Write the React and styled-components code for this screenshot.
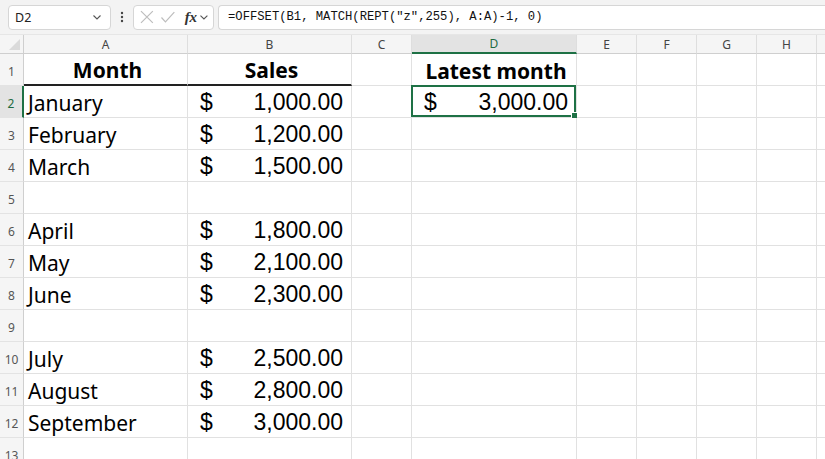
import React from "react";
import styled, { createGlobalStyle } from "styled-components";

const GlobalStyle = createGlobalStyle`
  html, body { margin: 0; padding: 0; background: #ffffff; overflow: hidden; }
  body { font-family: "Noto Sans", "Open Sans", sans-serif; }
`;

const COLS = ["A", "B", "C", "D", "E", "F", "G", "H", "I"];
const WIDTHS = [164, 164, 60, 165, 60, 60, 60, 60, 60];

const rows = [
  { month: "Month", sales: "Sales", head: true },
  { month: "January", sales: "1,000.00" },
  { month: "February", sales: "1,200.00" },
  { month: "March", sales: "1,500.00" },
  {},
  { month: "April", sales: "1,800.00" },
  { month: "May", sales: "2,100.00" },
  { month: "June", sales: "2,300.00" },
  {},
  { month: "July", sales: "2,500.00" },
  { month: "August", sales: "2,800.00" },
  { month: "September", sales: "3,000.00" },
  {},
];

const Chevron = () => (
  <svg width="10" height="10" viewBox="0 0 10 10">
    <path d="M1.5 3.5 L5 7 L8.5 3.5" fill="none" stroke="#555" strokeWidth="1.1" />
  </svg>
);

const App = () => {
  return (
    <>
      <GlobalStyle />
      <Page>
        <Toolbar>
          <NameBox>
            <span>D2</span>
            <Chevron />
          </NameBox>
          <Dots>
            <svg width="4" height="14" viewBox="0 0 4 14">
              <circle cx="2" cy="3" r="1.2" fill="#444" />
              <circle cx="2" cy="7" r="1.2" fill="#444" />
              <circle cx="2" cy="11" r="1.2" fill="#444" />
            </svg>
          </Dots>
          <ActionBox>
            <svg width="16" height="16" viewBox="0 0 16 16">
              <path d="M2 2 L14 14 M14 2 L2 14" stroke="#bdbdbd" strokeWidth="1.2" fill="none" />
            </svg>
            <svg width="16" height="16" viewBox="0 0 16 16">
              <path d="M1.5 8.5 L5.5 13 L14.5 3" stroke="#bdbdbd" strokeWidth="1.2" fill="none" />
            </svg>
            <Fx>fx</Fx>
            <Chevron />
          </ActionBox>
          <FormulaBox>=OFFSET(B1, MATCH(REPT("z",255), A:A)-1, 0)</FormulaBox>
        </Toolbar>

        <Sheet>
          <Corner />
          {COLS.map((c) => (
            <ColHead key={c} $active={c === "D"}>{c === "I" ? "" : c}</ColHead>
          ))}

          {rows.map((r, i) => {
            const n = i + 1;
            return (
              <React.Fragment key={n}>
                <RowHead $active={n === 2}>{n}</RowHead>
                <Cell $underline={r.head} $bold={r.head} $center={r.head}>
                  {r.month}
                </Cell>
                <Cell $underline={r.head} $bold={r.head} $center={r.head}>
                  {r.head ? r.sales : r.sales && (
                    <Money>
                      <span>$</span>
                      <span>{r.sales}</span>
                    </Money>
                  )}
                </Cell>
                <Cell />
                <Cell $bold={n === 1} $center={n === 1}>
                  {n === 1 && "Latest month"}
                  {n === 2 && (
                    <>
                      <Money>
                        <span>$</span>
                        <span>3,000.00</span>
                      </Money>
                      <Selection />
                    </>
                  )}
                </Cell>
                {COLS.slice(4).map((c) => (
                  <Cell key={c} />
                ))}
              </React.Fragment>
            );
          })}
        </Sheet>
      </Page>
    </>
  );
};

export default App;

const Page = styled.div`
  width: 825px;
  height: 459px;
  overflow: hidden;
  background: #ffffff;
`;

const Toolbar = styled.div`
  display: flex;
  align-items: center;
  height: 35px;
  padding: 0 0 0 8px;
  box-sizing: border-box;
  background: #f3f3f3;
  border-bottom: 1px solid #e6e6e6;
`;

const Box = styled.div`
  display: flex;
  align-items: center;
  height: 25px;
  box-sizing: border-box;
  background: #ffffff;
  border: 1px solid #d6d6d6;
  border-radius: 4px;
`;

const NameBox = styled(Box)`
  width: 103px;
  padding: 0 8px 0 6px;
  justify-content: space-between;
  font-size: 12.5px;
  color: #222;
`;

const Dots = styled.div`
  display: flex;
  align-items: center;
  justify-content: center;
  width: 22px;
`;

const ActionBox = styled(Box)`
  width: 81px;
  padding: 0 4px 0 5px;
  gap: 5px;
  svg:last-child { margin-left: -3px; }
`;

const Fx = styled.span`
  font-family: "Liberation Serif", serif;
  font-style: italic;
  font-weight: bold;
  font-size: 15px;
  color: #333;
  margin-left: 4px;
`;

const FormulaBox = styled(Box)`
  flex: 1;
  margin-left: 4px;
  padding-left: 9px;
  border-right: none;
  border-radius: 4px 0 0 4px;
  font-family: "Liberation Mono", monospace;
  font-size: 12.2px;
  color: #111;
  white-space: nowrap;
`;

const Sheet = styled.div`
  display: grid;
  grid-template-columns: 24px ${WIDTHS.map((w) => w + "px").join(" ")};
  grid-template-rows: 19px repeat(13, 32px);
`;

const Corner = styled.div`
  position: relative;
  background: #f5f5f5;
  border-right: 1px solid #cfcfcf;
  border-bottom: 1px solid #cfcfcf;
  &::after {
    content: "";
    position: absolute;
    right: 3px;
    bottom: 3px;
    border-style: solid;
    border-width: 0 0 11px 11px;
    border-color: transparent transparent #dadada transparent;
  }
`;

const ColHead = styled.div`
  display: flex;
  align-items: center;
  justify-content: center;
  box-sizing: border-box;
  font-size: 12px;
  color: ${({ $active }) => ($active ? "#1e6b41" : "#444")};
  background: ${({ $active }) => ($active ? "#e3e3e3" : "#f5f5f5")};
  border-right: 1px solid #dedede;
  border-bottom: ${({ $active }) => ($active ? "2px solid #1e7145" : "1px solid #cfcfcf")};
`;

const RowHead = styled.div`
  display: flex;
  align-items: flex-end;
  justify-content: center;
  padding-bottom: 5px;
  box-sizing: border-box;
  font-size: 12px;
  color: ${({ $active }) => ($active ? "#1e6b41" : "#555")};
  background: ${({ $active }) => ($active ? "#e3e3e3" : "#f5f5f5")};
  border-bottom: 1px solid #e3e3e3;
  border-right: ${({ $active }) => ($active ? "2px solid #1e7145" : "1px solid #cfcfcf")};
`;

const Cell = styled.div`
  position: relative;
  display: flex;
  align-items: center;
  justify-content: ${({ $center }) => ($center ? "center" : "flex-start")};
  padding: 2px 0 0 4px;
  box-sizing: border-box;
  font-size: 21px;
  font-weight: ${({ $bold }) => ($bold ? 700 : 400)};
  color: #000;
  white-space: nowrap;
  border-right: 1px solid #e1e1e1;
  border-bottom: ${({ $underline }) => ($underline ? "2px solid #222" : "1px solid #e1e1e1")};
`;

const Money = styled.div`
  display: flex;
  justify-content: space-between;
  width: 100%;
  padding: 0 8px 0 8px;
  box-sizing: border-box;
  font-family: "Liberation Sans", Arial, sans-serif;
  font-size: 23px;
`;

const Selection = styled.div`
  position: absolute;
  left: -1px;
  top: -1px;
  right: 0;
  bottom: 0;
  border: 2px solid #1e7145;
  &::after {
    content: "";
    position: absolute;
    right: -4px;
    bottom: -4px;
    width: 5px;
    height: 5px;
    background: #1e7145;
    border: 1px solid #fff;
  }
`;
